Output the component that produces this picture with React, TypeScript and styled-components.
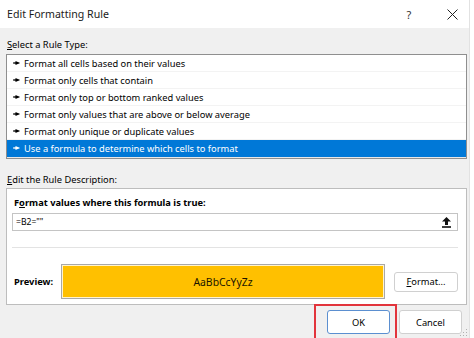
import React from "react";
import styled, { createGlobalStyle } from "styled-components";

const Global = createGlobalStyle`
  html, body { margin: 0; padding: 0; background: #ffffff; }
  * { box-sizing: border-box; }
`;

const Dialog = styled.div`
  position: relative;
  width: 470px;
  height: 338px;
  display: flex;
  flex-direction: column;
  background: #f0f0f0;
  border-right: 1px solid #e2e2e2;
  font-family: "Noto Sans", "Segoe UI", sans-serif;
  font-size: 9.3px;
  color: #000;
  overflow: hidden;
`;

const TitleBar = styled.div`
  height: 28px;
  flex: none;
  display: flex;
  align-items: center;
  background: #ffffff;
  padding-left: 7px;
`;

const Title = styled.div`
  flex: 1;
  font-size: 10.6px;
  color: #1a1a1a;
`;

const HelpButton = styled.div`
  width: 30px;
  text-align: center;
  font-size: 11px;
  color: #333;
  margin-right: 13px;
`;

const CloseButton = styled.div`
  width: 30px;
  height: 28px;
  display: flex;
  align-items: center;
  justify-content: center;
  margin-right: 2px;
`;

const Body = styled.div`
  flex: 1;
  display: flex;
  flex-direction: column;
  padding: 0 2px 0 6px;
`;

const SectionLabel = styled.div<{ $top: number }>`
  line-height: 14px;
  padding-left: 1px;
  margin-top: ${(p) => p.$top}px;
  margin-bottom: ${(p) => (p.$top > 12 ? 1 : 2)}px;
`;

const AccessKey = styled.span`
  text-decoration: underline;
  text-underline-offset: 1px;
`;

const ListBox = styled.div`
  background: #fff;
  border: 1px solid #8f8f8f;
  box-shadow: inset 0 0 0 1px #e8e8e8;
  padding-bottom: 1px;
  display: flex;
  flex-direction: column;
`;

const Row = styled.div<{ $selected?: boolean }>`
  height: 17px;
  display: flex;
  align-items: center;
  gap: 4px;
  padding-left: 6px;
  background: ${(p) => (p.$selected ? "#0078d7" : "#ffffff")};
  color: ${(p) => (p.$selected ? "#ffffff" : "#000000")};
  border-bottom: 1px solid ${(p) => (p.$selected ? "#0078d7" : "#f3f3f3")};
  white-space: nowrap;
`;

const DescBox = styled.div`
  background: #fff;
  border: 1px solid #bdbdbd;
  height: 117px;
  padding: 7px 8px 0 5px;
  display: flex;
  flex-direction: column;
`;

const BoldLabel = styled.div`
  font-weight: 700;
  line-height: 14px;
  padding-left: 2px;
`;

const FormulaInput = styled.div`
  margin-top: 3px;
  height: 18px;
  border: 1px solid #c4c4c4;
  display: flex;
  align-items: center;
  padding-left: 3px;
  font-size: 8.6px;
`;

const FormulaText = styled.span`
  flex: 1;
`;

const CollapseButton = styled.div`
  width: 17px;
  height: 16px;
  display: flex;
  align-items: center;
  justify-content: center;
  margin-right: 2px;
`;

const Separator = styled.div`
  margin-top: 16px;
  height: 1px;
  background: #e3e3e3;
`;

const PreviewRow = styled.div`
  margin-top: 16px;
  height: 35px;
  display: flex;
  align-items: center;
`;

const PreviewLabel = styled.div`
  width: 49px;
  font-weight: 700;
  padding-left: 2px;
`;

const PreviewSwatch = styled.div`
  width: 324px;
  height: 35px;
  background: #ffc000;
  border: 1px solid #a8a8a8;
  box-shadow: inset 0 0 0 1px #fff3cf;
  display: flex;
  align-items: center;
  justify-content: center;
  font-size: 10.4px;
  color: #1a1400;
`;

const Button = styled.div<{ $primary?: boolean }>`
  width: 63px;
  height: 24px;
  background: #ffffff;
  border: 1px solid ${(p) => (p.$primary ? "#5b8fd0" : "#d0d0d0")};
  border-radius: 3px;
  display: flex;
  align-items: center;
  justify-content: center;
  flex: none;
`;

const FormatButton = styled(Button)`
  width: 64px;
  height: 20px;
  margin-left: 9px;
`;

const Footer = styled.div`
  margin-top: 5px;
  display: flex;
  justify-content: flex-end;
  gap: 9px;
  padding-right: 5px;
`;

const Highlight = styled.div`
  position: relative;
`;

const RedFrame = styled.div`
  position: absolute;
  left: -13px;
  right: -7px;
  top: -6px;
  bottom: -10px;
  border: 2px solid #e2343c;
  pointer-events: none;
`;

const Grip = styled.svg`
  position: absolute;
  right: 1px;
  bottom: 1px;
`;

const Arrow = () => (
  <svg width="7" height="6" viewBox="0 0 7 6">
    <polygon points="0,2.6 2.5,2.3 7,3 2.5,3.7 0,3.4" fill="currentColor" />
    <polygon points="2.5,1 7,3 2.5,5" fill="currentColor" />
  </svg>
);

const rules = [
  "Format all cells based on their values",
  "Format only cells that contain",
  "Format only top or bottom ranked values",
  "Format only values that are above or below average",
  "Format only unique or duplicate values",
  "Use a formula to determine which cells to format",
];

export default function App() {
  return (
    <>
      <Global />
      <Dialog>
        <TitleBar>
          <Title>Edit Formatting Rule</Title>
          <HelpButton>?</HelpButton>
          <CloseButton>
            <svg width="11" height="11" viewBox="0 0 11 11">
              <path d="M0.5 0.5 L10.5 10.5 M10.5 0.5 L0.5 10.5" stroke="#222" strokeWidth="1" />
            </svg>
          </CloseButton>
        </TitleBar>
        <Body>
          <SectionLabel $top={10}>
            <AccessKey>S</AccessKey>elect a Rule Type:
          </SectionLabel>
          <ListBox>
            {rules.map((r, i) => (
              <Row key={r} $selected={i === rules.length - 1}>
                <Arrow />
                <span>{r}</span>
              </Row>
            ))}
          </ListBox>
          <SectionLabel $top={14}>
            <AccessKey>E</AccessKey>dit the Rule Description:
          </SectionLabel>
          <DescBox>
            <BoldLabel>
              F<AccessKey>o</AccessKey>rmat values where this formula is true:
            </BoldLabel>
            <FormulaInput>
              <FormulaText>=B2=""</FormulaText>
              <CollapseButton>
                <svg width="9" height="11" viewBox="0 0 9 11">
                  <polygon points="4.5,0 9,4.5 6,4.5 6,8 3,8 3,4.5 0,4.5" fill="#111" />
                  <rect x="0" y="9.2" width="9" height="1.6" fill="#111" />
                </svg>
              </CollapseButton>
            </FormulaInput>
            <Separator />
            <PreviewRow>
              <PreviewLabel>Preview:</PreviewLabel>
              <PreviewSwatch>AaBbCcYyZz</PreviewSwatch>
              <FormatButton>
                <span>
                  <AccessKey>F</AccessKey>ormat...
                </span>
              </FormatButton>
            </PreviewRow>
          </DescBox>
          <Footer>
            <Highlight>
              <Button $primary>OK</Button>
              <RedFrame />
            </Highlight>
            <Button>Cancel</Button>
          </Footer>
        </Body>
        <Grip width="8" height="8" viewBox="0 0 8 8">
          <rect x="6" y="0" width="1" height="1" fill="#b0b0b0" />
          <rect x="3" y="3" width="1" height="1" fill="#b0b0b0" />
          <rect x="6" y="3" width="1" height="1" fill="#b0b0b0" />
          <rect x="0" y="6" width="1" height="1" fill="#b0b0b0" />
          <rect x="3" y="6" width="1" height="1" fill="#b0b0b0" />
          <rect x="6" y="6" width="1" height="1" fill="#b0b0b0" />
        </Grip>
      </Dialog>
    </>
  );
}
